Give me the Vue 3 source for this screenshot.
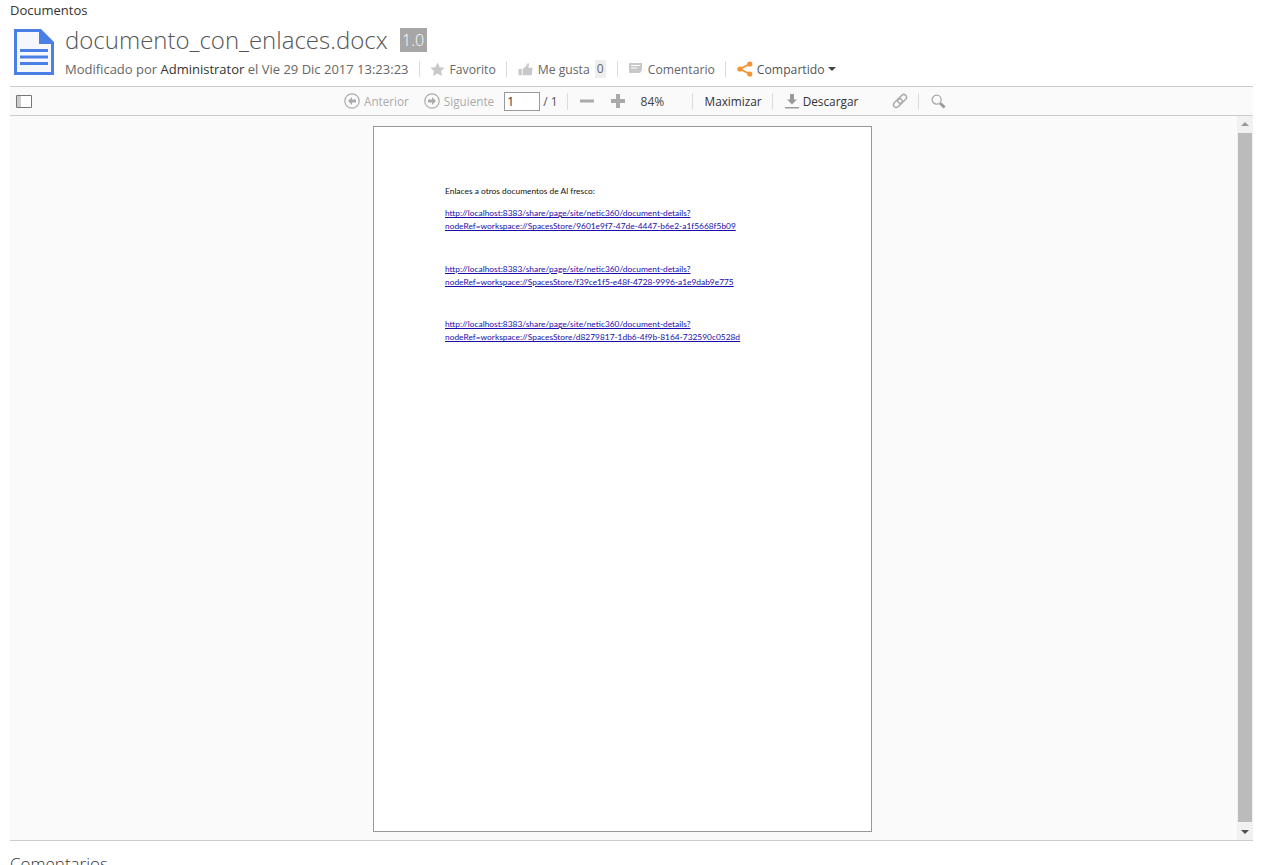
<script setup>
// enlaces del documento de ejemplo
const links = [
  'nodeRef=workspace://SpacesStore/9601e9f7-47de-4447-b6e2-a1f5668f5b09',
  'nodeRef=workspace://SpacesStore/f39ce1f5-e48f-4728-9996-a1e9dab9e775',
  'nodeRef=workspace://SpacesStore/d8279817-1db6-4f9b-8164-732590c0528d',
]
const baseUrl = 'http://localhost:8383/share/page/site/netic360/document-details?'
</script>

<template>
  <div class="page">
    <div class="crumb">Documentos</div>

    <header class="doc-header">
      <svg class="doc-icon" viewBox="0 0 40 46">
        <path d="M0 0H27L40 13V46H0Z" fill="#4a7fe6" />
        <path d="M3 3H25V15H37V43H3Z" fill="#f6f8fd" />
        <path d="M6 20H34V23H6ZM6 26.500H34V29.500H6ZM6 33H34V36H6Z" fill="#4a7fe6" />
      </svg>
      <div class="doc-info">
        <div class="title-row">
          <h1 class="title">documento_con_enlaces.docx</h1>
          <span class="version">1.0</span>
        </div>
        <div class="meta-row">
          <span class="meta-text">Modificado por <b>Administrator</b> el Vie 29 Dic 2017 13:23:23</span>
          <i class="sep sep--first"></i>
          <svg class="meta-icon" viewBox="0 0 16 16"><path d="M8 .5l2.300 5 5.500.6-4.100 3.600 1.200 5.300L8 12.300 3.100 15l1.200-5.300L.2 6.100l5.500-.6z" fill="#c8c8c8" /></svg>
          <span class="action">Favorito</span>
          <i class="sep"></i>
          <svg class="meta-icon meta-icon--like" viewBox="0 0 16 16"><path d="M.5 7.500h3.500V14H.5zM5 7.500l3.500-3L10.500 1c1.200 0 1.500 1.200 1.100 2.500L11 6h4.500l-.8 8H5z" fill="#c8c8c8" /></svg>
          <span class="action">Me gusta</span>
          <span class="count">0</span>
          <i class="sep sep--count"></i>
          <svg class="meta-icon meta-icon--comment" viewBox="0 0 13 10">
            <path d="M0 0h13v7l-2 3H0z" fill="#c8c8c8" />
            <path d="M2 2h9v1H2zM2 4.500h6v1H2z" fill="#fff" />
          </svg>
          <span class="action">Comentario</span>
          <i class="sep"></i>
          <svg class="meta-icon meta-icon--share" viewBox="0 0 16 16">
            <path d="M12.800 3L3 8l9.800 5" fill="none" stroke="#f5922f" stroke-width="1.800" />
            <circle cx="12.800" cy="3" r="2.600" fill="#f5922f" />
            <circle cx="3" cy="8" r="2.600" fill="#f5922f" />
            <circle cx="12.800" cy="13" r="2.600" fill="#f5922f" />
          </svg>
          <span class="action action--share">Compartido</span>
          <i class="caret"></i>
        </div>
      </div>
    </header>

    <div class="toolbar">
      <svg class="sidebar-icon" viewBox="0 0 16 13">
        <path d="M.5.500h15v12H.5z" fill="#fff" stroke="#777" />
        <path d="M1 1h4v11H1z" fill="#ccc" />
      </svg>
      <svg class="nav-icon nav-icon--prev" viewBox="0 0 16 16">
        <circle cx="8" cy="8" r="7.200" fill="none" stroke="#aaa" stroke-width="1.200" />
        <path d="M8 4L4 8l4 4V9.500h4v-3H8z" fill="#aaa" />
      </svg>
      <span class="nav-label">Anterior</span>
      <svg class="nav-icon nav-icon--next" viewBox="0 0 16 16">
        <circle cx="8" cy="8" r="7.200" fill="none" stroke="#aaa" stroke-width="1.200" />
        <path d="M8 4l4 4-4 4V9.500H4v-3h4z" fill="#aaa" />
      </svg>
      <span class="nav-label">Siguiente</span>
      <input class="page-input" value="1" />
      <span class="page-total">/ 1</span>
      <i class="sep sep--tool sep--total"></i>
      <svg class="zoom-icon zoom-icon--minus" viewBox="0 0 14 14"><path d="M0 5.500h14v3H0z" fill="#aaa" /></svg>
      <svg class="zoom-icon zoom-icon--plus" viewBox="0 0 14 14"><path d="M5 0h4v5h5v4H9v5H5V9H0V5h5z" fill="#aaa" /></svg>
      <span class="zoom-value">84%</span>
      <i class="sep sep--tool sep--zoom"></i>
      <span class="tool-btn tool-btn--max">Maximizar</span>
      <i class="sep sep--tool sep--max"></i>
      <svg class="download-icon" viewBox="0 0 14 15">
        <path d="M5 0h4v5.500h3L7 10.500 2 5.500h3zM0 13h14v1.500H0z" fill="#999" />
      </svg>
      <span class="tool-btn tool-btn--down">Descargar</span>
      <svg class="clip-icon" viewBox="0 0 16 16">
        <g fill="none" stroke="#aaa" stroke-width="1.500" transform="rotate(-45 8 8)">
          <rect x="0" y="5.300" width="10" height="5.400" rx="2.700" />
          <rect x="6" y="5.300" width="10" height="5.400" rx="2.700" />
        </g>
      </svg>
      <i class="sep sep--tool sep--clip"></i>
      <svg class="search-icon" viewBox="0 0 16 16">
        <circle cx="6" cy="6" r="4.800" fill="none" stroke="#aaa" stroke-width="1.400" />
        <path d="M9.800 9.800L14.500 14.500" stroke="#999" stroke-width="3" />
      </svg>
    </div>

    <div class="viewer">
      <div class="viewer-main">
        <div class="sheet">
          <p class="sheet-intro">Enlaces a otros documentos de Al fresco:</p>
          <p v-for="link in links" :key="link" class="sheet-link">
            <a>{{ baseUrl }}</a><br /><a>{{ link }}</a>
          </p>
        </div>
      </div>
      <div class="scrollbar">
        <i class="arrow arrow--up"></i>
        <div class="thumb"></div>
        <i class="arrow arrow--down"></i>
      </div>
    </div>

    <h2 class="comments">Comentarios</h2>
  </div>
</template>

<style scoped>
.page {
  width: 1272px;
  height: 865px;
  overflow: hidden;
  padding: 0 19px 0 10px;
  box-sizing: border-box;
  font-family: "Open Sans", "Liberation Sans", sans-serif;
  font-size: 12px;
  color: #333;
  background: #fff;
}

.crumb {
  height: 21px;
  line-height: 21px;
  font-size: 13px;
  color: #333;
}

.doc-header {
  display: flex;
  height: 65px;
  padding-left: 4px;
}

.doc-icon {
  width: 40px;
  height: 46px;
  margin-top: 8px;
  flex: none;
}

.doc-info {
  margin-left: 11px;
}

.title-row {
  display: flex;
  height: 33px;
  align-items: center;
  margin-top: 2px;
}

.title {
  margin: 0;
  font-size: 24px;
  font-weight: 300;
  color: #555;
  line-height: 33px;
}

.version {
  width: 27px;
  height: 24px;
  margin-left: 12px;
  line-height: 24px;
  text-align: center;
  font-size: 16px;
  font-weight: 300;
  color: #fff;
  background: #a6a6a6;
}

.meta-row {
  display: flex;
  align-items: center;
  height: 20px;
  margin-top: 3px;
  white-space: nowrap;
}

.meta-text {
  font-size: 13px;
  color: #666;
}

.meta-text b {
  font-weight: 400;
  color: #333;
}

.sep {
  display: block;
  width: 1px;
  height: 16px;
  margin: 0 11px 0 10px;
  background: #ddd;
  flex: none;
}

.sep--first {
  margin-right: 10px;
}

.sep--count {
  margin-left: 11px;
}

.meta-icon {
  width: 15px;
  height: 15px;
  margin-right: 5px;
  flex: none;
}

.meta-icon--comment {
  width: 13px;
  height: 10px;
  margin-right: 6px;
  margin-top: -3px;
}

.meta-icon--share {
  width: 16px;
  height: 16px;
  margin-right: 4px;
}

.action {
  font-size: 12.200px;
  color: #666;
}

.action--share {
  color: #555;
}

.count {
  margin-left: 5px;
  width: 11px;
  height: 18px;
  line-height: 18px;
  text-align: center;
  font-size: 12px;
  color: #666;
  background: #eee;
}

.caret {
  width: 0;
  height: 0;
  margin-left: 3px;
  border: 4px solid transparent;
  border-top: 4px solid #444;
  border-bottom: 0;
}

.toolbar {
  display: flex;
  align-items: center;
  height: 28px;
  border-top: 1px solid #ccc;
  border-bottom: 1px solid #ccc;
  background: #fafafa;
  white-space: nowrap;
}

.sidebar-icon {
  width: 16px;
  height: 13px;
  margin-left: 6px;
  flex: none;
}

.nav-icon {
  width: 16px;
  height: 16px;
  flex: none;
}

.nav-icon--prev {
  margin-left: 312px;
}

.nav-icon--next {
  margin-left: 15px;
}

.nav-label {
  margin-left: 4px;
  font-size: 11.700px;
  color: #aaa;
}

.page-input {
  width: 36px;
  height: 19px;
  margin-left: 10px;
  padding: 0 0 0 2px;
  box-sizing: border-box;
  border: 1px solid #999;
  background: #fff;
  font-family: inherit;
  font-size: 12px;
  color: #333;
  outline: none;
}

.page-total {
  margin-left: 3px;
  font-size: 12px;
  color: #555;
}

.sep--tool {
  margin: 0;
  height: 17px;
}

.sep--total {
  margin-left: 9px;
}

.zoom-icon {
  width: 14px;
  height: 14px;
  flex: none;
}

.zoom-icon--minus {
  margin-left: 12px;
}

.zoom-icon--plus {
  margin-left: 17px;
}

.zoom-value {
  width: 24px;
  margin-left: 16px;
  font-size: 12px;
  color: #444;
}

.sep--zoom {
  margin-left: 27px;
}

.tool-btn {
  font-size: 11.800px;
  color: #333;
}

.tool-btn--max {
  margin-left: 12px;
}

.sep--max {
  margin-left: 10px;
}

.download-icon {
  width: 14px;
  height: 15px;
  margin-left: 12px;
  flex: none;
}

.tool-btn--down {
  margin-left: 4px;
}

.clip-icon {
  width: 16px;
  height: 16px;
  margin-left: 34px;
  flex: none;
}

.sep--clip {
  margin-left: 10px;
}

.search-icon {
  width: 15px;
  height: 15px;
  margin-left: 12px;
  flex: none;
}

.viewer {
  display: flex;
  height: 724px;
  border-bottom: 1px solid #ccc;
  background: #fafafa;
}

.viewer-main {
  flex: 1;
  padding: 10px 0 0 363px;
}

.sheet {
  width: 499px;
  height: 706px;
  box-sizing: border-box;
  padding: 58px 0 0 71px;
  border: 1px solid #999;
  background: #fff;
  font-family: Lato, "Open Sans", sans-serif;
  font-size: 8.400px;
  line-height: 13px;
}

.sheet-intro {
  margin: 0 0 9px;
  color: #111;
}

.sheet-link {
  margin: 0 0 29.500px;
  white-space: nowrap;
}

.sheet-link a {
  color: #1a0dab;
  text-decoration: underline;
}

.scrollbar {
  position: relative;
  width: 16px;
  background: #f1f1f1;
  flex: none;
}

.thumb {
  position: absolute;
  top: 17px;
  left: 1px;
  width: 14px;
  height: 689px;
  background: #bbb;
}

.arrow {
  position: absolute;
  left: 4px;
  width: 0;
  height: 0;
  border: 4px solid transparent;
}

.arrow--up {
  top: 6px;
  border-top: 0;
  border-bottom: 4px solid #999;
}

.arrow--down {
  bottom: 6px;
  border-bottom: 0;
  border-top: 4px solid #505050;
}

.comments {
  margin: 12px 0 0;
  font-size: 17px;
  font-weight: 300;
  line-height: 22px;
  color: #333;
}
</style>
